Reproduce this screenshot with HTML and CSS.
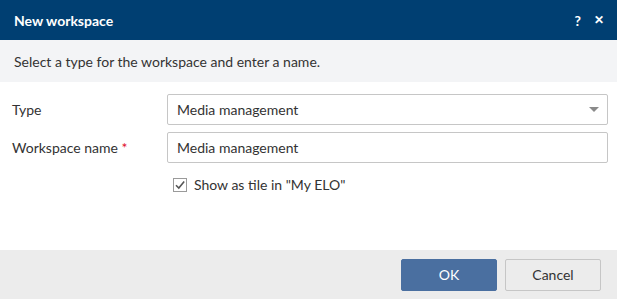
FILE: index.html
```html
<!DOCTYPE html>
<html>
<head>
<meta charset="utf-8">
<link rel="stylesheet" href="styles.css">
</head>
<body>
<div class="dialog">
  <div class="header">
    <span class="title">New workspace</span>
    <span class="tools"><span class="help">?</span><span class="close">✕</span></span>
  </div>
  <div class="info">Select a type for the workspace and enter a name.</div>
  <div class="body">
    <div class="row">
      <label class="label">Type</label>
      <div class="field select"><span>Media management</span><span class="caret"></span></div>
    </div>
    <div class="row">
      <label class="label">Workspace name <span class="req">*</span></label>
      <div class="field"><span>Media management</span></div>
    </div>
    <div class="row check-row">
      <span class="label"></span>
      <label class="check">
        <svg class="box" width="14" height="14" viewBox="0 0 14 14"><rect x="0.5" y="0.5" width="13" height="13" fill="#fff" stroke="#9a9a9a"/><path d="M3 7.2 L5.8 10 L11.2 3.6" fill="none" stroke="#555" stroke-width="1.6"/></svg>
        <span>Show as tile in "My ELO"</span>
      </label>
    </div>
  </div>
  <div class="footer">
    <button class="btn ok">OK</button>
    <button class="btn cancel">Cancel</button>
  </div>
</div>
</body>
</html>
```
FILE: styles.css
```css
html, body { margin: 0; padding: 0; }
body { font-family: "Source Sans Pro", "Lato", "Noto Sans", sans-serif; font-size: 14px; color: #333; background: #fff; }
.dialog { width: 617px; height: 299px; display: flex; flex-direction: column; }
.header { height: 40px; background: #003f72; color: #fff; display: flex; align-items: center; justify-content: space-between; padding: 0 13px 0 14px; box-sizing: border-box; }
.title { font-weight: bold; font-size: 14px; }
.tools { display: flex; gap: 13px; font-weight: bold; font-size: 14px; }
.close { font-size: 12px; }
.info { height: 42px; background: #f3f4f6; display: flex; align-items: center; padding-left: 14px; box-sizing: border-box; color: #333; }
.body { flex: 1; padding: 12px 9px 0 12px; display: flex; flex-direction: column; gap: 7px; }
.row { display: flex; align-items: center; }
.label { width: 155px; flex: none; }
.req { color: #e0102a; }
.field { flex: 1; height: 31px; box-sizing: border-box; border: 1px solid #c6c6c6; border-radius: 2px; display: flex; align-items: center; justify-content: space-between; padding: 0 9px; }
.caret { width: 0; height: 0; border-left: 5px solid transparent; border-right: 5px solid transparent; border-top: 5px solid #8a8a8a; margin-right: -1px; }
.check-row { margin-top: 6px; }
.check { display: flex; align-items: center; gap: 7px; padding-left: 6px; }
.box { flex: none; }
.footer { height: 49px; background: #ececec; display: flex; justify-content: flex-end; align-items: center; gap: 8px; padding-right: 16px; }
.btn { font-family: inherit; font-size: 14px; width: 96px; height: 32px; border-radius: 2px; }
.ok { background: #4a6fa0; color: #fff; border: 1px solid #4a6fa0; }
.cancel { background: #ececec; color: #333; border: 1px solid #c6c6c6; }
```
